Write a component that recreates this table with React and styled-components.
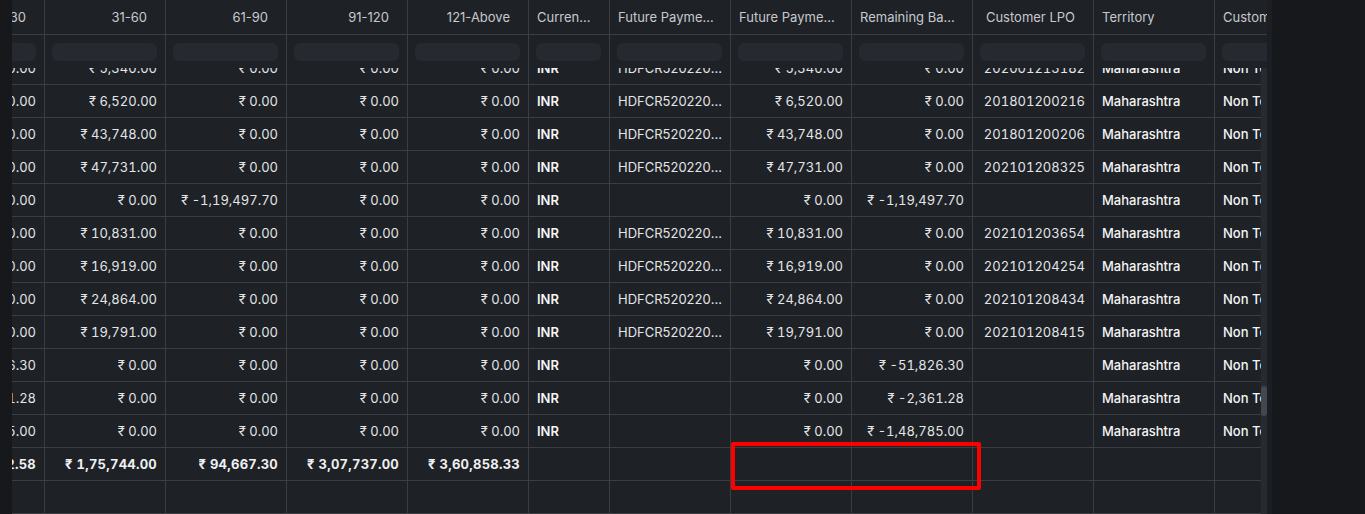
import React from 'react';
import styled, { createGlobalStyle } from 'styled-components';

const GlobalStyle = createGlobalStyle`
  html, body {
    margin: 0;
    padding: 0;
    background: #17181b;
  }
  * {
    box-sizing: border-box;
  }
`;

// clip: long titles that get cut with an ellipsis in the header
const COLUMNS = [
  { key: 'b0', title: '0-30', width: 121, align: 'right', num: true },
  { key: 'b1', title: '31-60', width: 121, align: 'right', num: true },
  { key: 'b2', title: '61-90', width: 121, align: 'right', num: true },
  { key: 'b3', title: '91-120', width: 121, align: 'right', num: true },
  { key: 'b4', title: '121-Above', width: 121, align: 'right', num: true },
  { key: 'currency', title: 'Currency', width: 81, align: 'left', weight: 600 },
  { key: 'fpRef', title: 'Future Payment Ref', width: 121, align: 'left' },
  { key: 'fpAmount', title: 'Future Payment Amount', width: 121, align: 'right', num: true, clip: true },
  { key: 'remaining', title: 'Remaining Balance', width: 121, align: 'right', num: true, clip: true },
  { key: 'lpo', title: 'Customer LPO', width: 121, align: 'right', num: true },
  { key: 'territory', title: 'Territory', width: 121, align: 'left', weight: 500 },
  { key: 'group', title: 'Customer Group', width: 121, align: 'left', weight: 500 },
];

const GRID = COLUMNS.map(c => `${c.width}px`).join(' ');

const ref = 'HDFCR5202201458';

const row = (b0, b1, b2, fpRef, fpAmount, remaining, lpo) => ({
  b0, b1, b2, b3: '₹ 0.00', b4: '₹ 0.00',
  currency: 'INR', fpRef, fpAmount, remaining, lpo,
  territory: 'Maharashtra', group: 'Non Territory',
});

const ROWS = [
  row('₹ 0.00', '₹ 5,340.00', '₹ 0.00', ref, '₹ 5,340.00', '₹ 0.00', '202001213182'),
  row('₹ 0.00', '₹ 6,520.00', '₹ 0.00', ref, '₹ 6,520.00', '₹ 0.00', '201801200216'),
  row('₹ 0.00', '₹ 43,748.00', '₹ 0.00', ref, '₹ 43,748.00', '₹ 0.00', '201801200206'),
  row('₹ 0.00', '₹ 47,731.00', '₹ 0.00', ref, '₹ 47,731.00', '₹ 0.00', '202101208325'),
  row('₹ 0.00', '₹ 0.00', '₹ -1,19,497.70', '', '₹ 0.00', '₹ -1,19,497.70', ''),
  row('₹ 0.00', '₹ 10,831.00', '₹ 0.00', ref, '₹ 10,831.00', '₹ 0.00', '202101203654'),
  row('₹ 0.00', '₹ 16,919.00', '₹ 0.00', ref, '₹ 16,919.00', '₹ 0.00', '202101204254'),
  row('₹ 0.00', '₹ 24,864.00', '₹ 0.00', ref, '₹ 24,864.00', '₹ 0.00', '202101208434'),
  row('₹ 0.00', '₹ 19,791.00', '₹ 0.00', ref, '₹ 19,791.00', '₹ 0.00', '202101208415'),
  row('₹ -51,826.30', '₹ 0.00', '₹ 0.00', '', '₹ 0.00', '₹ -51,826.30', ''),
  row('₹ -2,361.28', '₹ 0.00', '₹ 0.00', '', '₹ 0.00', '₹ -2,361.28', ''),
  row('₹ -1,48,785.00', '₹ 0.00', '₹ 0.00', '', '₹ 0.00', '₹ -1,48,785.00', ''),
];

const TOTALS = {
  b0: '₹ -1,22,022.58',
  b1: '₹ 1,75,744.00',
  b2: '₹ 94,667.30',
  b3: '₹ 3,07,737.00',
  b4: '₹ 3,60,858.33',
};

const Page = styled.div`
  position: relative;
  display: flex;
  height: 514px;
  width: 1365px;
  overflow: hidden;
  background: #17181b;
  font-family: 'Inter', 'Noto Sans', sans-serif;
  font-size: 13px;
`;

const LeftStrip = styled.div`
  width: 12px;
  flex: none;
  background: #16181b;
`;

const Panel = styled.div`
  width: 1260px;
  flex: none;
  display: flex;
  flex-direction: column;
  padding-right: 5px;
  background: #1b1e22;
`;

const HeadViewport = styled.div`
  width: 1255px;
  overflow: hidden;
  background: #1e2125;
`;

const Grid = styled.div`
  display: grid;
  grid-template-columns: ${GRID};
  margin-left: -88px;
  width: max-content;
`;

const HeaderRow = styled(Grid)`
  height: 35px;
  border-bottom: 1px solid #3a3d42;
`;

const HeaderCell = styled.div`
  display: flex;
  align-items: center;
  justify-content: ${p => (p.$align === 'right' ? 'flex-end' : 'flex-start')};
  padding: 0 ${p => (p.$align === 'right' && !p.$clip ? '18px' : '16px')} 0 8px;
  border-right: 1px solid #3a3d42;
  color: #c6c9cf;
  font-weight: 400;
  min-width: 0;

  span {
    white-space: nowrap;
    overflow: hidden;
    text-overflow: ellipsis;
  }
`;

const FilterRow = styled(Grid)`
  height: 33px;
`;

const FilterCell = styled.div`
  display: flex;
  align-items: center;
  padding: 0 8px 0 7px;
  border-right: 1px solid #3a3d42;
`;

const FilterPill = styled.div`
  width: 100%;
  height: 18px;
  border-radius: 6px;
  background: #262930;
`;

const BodyWrap = styled.div`
  flex: 1;
  display: flex;
  min-height: 0;
`;

const BodyViewport = styled.div`
  width: 1249px;
  overflow: hidden;
  background: #1e2125;
`;

const BodyInner = styled.div`
  margin-top: -16px;
`;

const Row = styled(Grid)`
  height: 33px;
  border-bottom: 1px solid #3a3d42;
`;

const Cell = styled.div`
  display: flex;
  align-items: center;
  justify-content: ${p => (p.$align === 'right' ? 'flex-end' : 'flex-start')};
  padding: 0 8px;
  border-right: 1px solid #3a3d42;
  color: ${p => (p.$weight ? '#f4f5f7' : '#e3e5e8')};
  font-weight: ${p => p.$weight || 400};
  font-variant-numeric: ${p => (p.$num ? 'tabular-nums' : 'normal')};
  min-width: 0;

  span {
    white-space: nowrap;
    overflow: hidden;
    text-overflow: ellipsis;
  }
`;

const TotalCell = styled(Cell)`
  font-weight: 700;
  letter-spacing: 0.25px;
  color: #eef0f2;
`;

const ScrollTrack = styled.div`
  position: relative;
  width: 6px;
  flex: none;
  background: #272a2f;
`;

const ScrollThumb = styled.div`
  position: absolute;
  left: 0;
  top: 318px;
  width: 6px;
  height: 30px;
  border-radius: 3px;
  background: #44474d;
`;

const Highlight = styled.div`
  position: absolute;
  left: 731px;
  top: 442px;
  width: 250px;
  height: 48px;
  border: 4px solid #ff0000;
  border-radius: 2px;
  pointer-events: none;
`;

export default function App() {
  return (
    <>
      <GlobalStyle />
      <Page>
        <LeftStrip />
        <Panel>
          <HeadViewport>
            <HeaderRow>
              {COLUMNS.map(col => (
                <HeaderCell key={col.key} $align={col.align} $clip={col.clip}>
                  <span>{col.title}</span>
                </HeaderCell>
              ))}
            </HeaderRow>
            <FilterRow>
              {COLUMNS.map(col => (
                <FilterCell key={col.key}>
                  <FilterPill />
                </FilterCell>
              ))}
            </FilterRow>
          </HeadViewport>
          <BodyWrap>
            <BodyViewport>
              <BodyInner>
                {ROWS.map((r, i) => (
                  <Row key={i}>
                    {COLUMNS.map(col => (
                      <Cell key={col.key} $align={col.align} $weight={col.weight} $num={col.num}>
                        <span>{r[col.key]}</span>
                      </Cell>
                    ))}
                  </Row>
                ))}
                <Row>
                  {COLUMNS.map(col => (
                    <TotalCell key={col.key} $align={col.align} $num={col.num}>
                      <span>{TOTALS[col.key] || ''}</span>
                    </TotalCell>
                  ))}
                </Row>
                <Row>
                  {COLUMNS.map(col => (
                    <Cell key={col.key} $align={col.align} />
                  ))}
                </Row>
              </BodyInner>
            </BodyViewport>
            <ScrollTrack>
              <ScrollThumb />
            </ScrollTrack>
          </BodyWrap>
        </Panel>
        <Highlight />
      </Page>
    </>
  );
}
